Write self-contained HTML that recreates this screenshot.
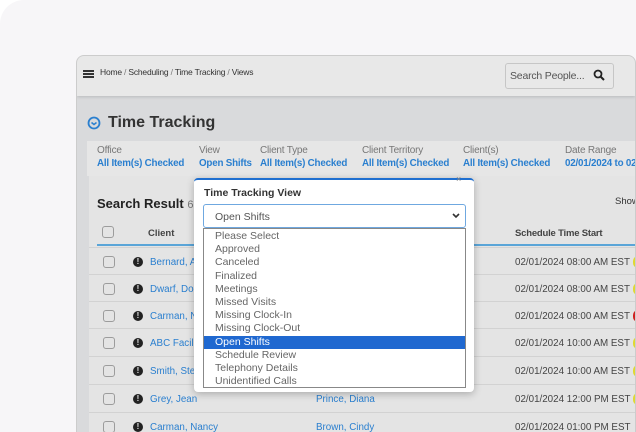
<!DOCTYPE html><html><head><style>
*{margin:0;padding:0;box-sizing:border-box}
html,body{width:636px;height:432px;overflow:hidden}
body{background:#f7f6f8;font-family:"Liberation Sans",sans-serif;position:relative}
.a{position:absolute}
.frame{left:76px;top:55px;width:560px;height:377px;background:#d9dadc;border-radius:8px 8px 0 0;overflow:hidden;border:1px solid #ccc;border-bottom:none}
.hdr{left:0;top:0;width:100%;height:40px;background:#e8e8e8;box-shadow:0 1px 3px rgba(0,0,0,.15)}
.lnk{color:#2a7fcf;font-weight:bold}
.f{font-size:10px;color:#777;line-height:13px;white-space:nowrap;letter-spacing:-0.2px}
.f .lnk{font-size:9.8px}
.row{position:absolute;left:0;width:560px;height:27px;border-top:1px solid #d2d2d2;font-size:9.8px}
.cb{position:absolute;width:12px;height:12px;border:1px solid #9c9c9c;border-radius:3px;background:#e4e4e4}
.ex{position:absolute;width:10px;height:10px;border-radius:50%;background:#222;color:#e4e4e4;font-size:8px;font-weight:bold;text-align:center;line-height:10px}
.opt{height:13.2px;line-height:13.2px;padding-left:11px;font-size:10.5px;color:#666}
.t{color:#444}
</style></head><body>
<div class="a" style="left:0;top:0;width:40px;height:40px;background:#fff"></div>
<div class="a" style="left:0;top:0;width:40px;height:40px;background:#f7f6f8;border-top-left-radius:24px"></div>
<div class="a frame">
 <div class="a hdr">
  <div class="a" style="left:6px;top:14px;width:11px;height:2px;background:#333;box-shadow:0 3px 0 #333,0 6px 0 #333"></div>
  <div class="a" style="left:23px;top:11px;font-size:8.5px;color:#333;letter-spacing:-0.2px">Home <span style="color:#777">/</span> Scheduling <span style="color:#777">/</span> Time Tracking <span style="color:#777">/</span> Views</div>
  <div class="a" style="left:428px;top:7px;width:109px;height:26px;border:1px solid #c6c6c6;border-radius:3px;font-size:10.5px;color:#555;padding:6px 0 0 4px;letter-spacing:-0.2px">Search People...</div>
  <svg class="a" style="left:516px;top:13px" width="12" height="12" viewBox="0 0 12 12"><circle cx="5" cy="5" r="3.5" fill="none" stroke="#222" stroke-width="1.8"/><path d="M7.5 7.5L11 11" stroke="#222" stroke-width="2"/></svg>
 </div>
 <svg class="a" style="left:10px;top:60px" width="14" height="14" viewBox="0 0 14 14"><circle cx="7" cy="7" r="5.5" fill="none" stroke="#2a7fcf" stroke-width="1.8"/><path d="M4.5 6.5L7 8.5 9.5 6.5" fill="none" stroke="#2a7fcf" stroke-width="1.5"/></svg>
 <div class="a" style="left:31px;top:58px;font-size:16px;font-weight:bold;color:#333">Time Tracking</div>
 <div class="a" style="left:10px;top:85px;width:550px;height:35px;background:#e6e6e6"></div>
 <div class="a f" style="left:20px;top:88px">Office<br><span class="lnk">All Item(s) Checked</span></div>
 <div class="a f" style="left:122px;top:88px">View<br><span class="lnk">Open Shifts</span></div>
 <div class="a f" style="left:183px;top:88px">Client Type<br><span class="lnk">All Item(s) Checked</span></div>
 <div class="a f" style="left:285px;top:88px">Client Territory<br><span class="lnk">All Item(s) Checked</span></div>
 <div class="a f" style="left:386px;top:88px">Client(s)<br><span class="lnk">All Item(s) Checked</span></div>
 <div class="a f" style="left:488px;top:88px">Date Range<br><span class="lnk">02/01/2024 to 02</span></div>
 <div class="a" style="left:12px;top:120px;width:560px;height:257px;background:#e4e4e4;overflow:hidden">
  <div class="a" style="left:8px;top:20px;font-size:13px;font-weight:bold;color:#222">Search Result <span style="font-weight:normal;color:#777;font-size:11px">61</span></div>
  <div class="a" style="left:526px;top:20px;font-size:9.5px;color:#333">Show</div>
  <div class="cb" style="left:13px;top:50px"></div>
  <div class="a" style="left:59px;top:52px;font-size:9.5px;font-weight:bold;color:#444">Client</div>
  <div class="a" style="left:426px;top:52px;font-size:9.5px;font-weight:bold;color:#444;letter-spacing:-0.2px">Schedule Time Start</div>
  <div class="a" style="left:8px;top:68px;width:552px;height:2px;background:#5aa5d8"></div>
  <div class="row" style="top:71px"><div class="cb" style="left:14px;top:8px"></div><div class="ex" style="left:44px;top:9px">!</div><div class="a lnk" style="left:61px;top:9px;font-weight:normal">Bernard, A</div><div class="a t" style="left:426px;top:9px">02/01/2024 08:00 AM EST</div><div class="a" style="left:544px;top:8px;width:10px;height:12px;border-radius:5px;background:#e0d830"></div></div>
  <div class="row" style="top:98px"><div class="cb" style="left:14px;top:8px"></div><div class="ex" style="left:44px;top:9px">!</div><div class="a lnk" style="left:61px;top:9px;font-weight:normal">Dwarf, Doc</div><div class="a t" style="left:426px;top:9px">02/01/2024 08:00 AM EST</div><div class="a" style="left:544px;top:8px;width:10px;height:12px;border-radius:5px;background:#e0d830"></div></div>
  <div class="row" style="top:125px"><div class="cb" style="left:14px;top:8px"></div><div class="ex" style="left:44px;top:9px">!</div><div class="a lnk" style="left:61px;top:9px;font-weight:normal">Carman, N</div><div class="a t" style="left:426px;top:9px">02/01/2024 08:00 AM EST</div><div class="a" style="left:544px;top:8px;width:10px;height:12px;border-radius:5px;background:#d02020"></div></div>
  <div class="row" style="top:152px"><div class="cb" style="left:14px;top:8px"></div><div class="ex" style="left:44px;top:9px">!</div><div class="a lnk" style="left:61px;top:9px;font-weight:normal">ABC Facili</div><div class="a t" style="left:426px;top:9px">02/01/2024 10:00 AM EST</div><div class="a" style="left:544px;top:8px;width:10px;height:12px;border-radius:5px;background:#e0d830"></div></div>
  <div class="row" style="top:180px"><div class="cb" style="left:14px;top:8px"></div><div class="ex" style="left:44px;top:9px">!</div><div class="a lnk" style="left:61px;top:9px;font-weight:normal">Smith, Ste</div><div class="a t" style="left:426px;top:9px">02/01/2024 10:00 AM EST</div><div class="a" style="left:544px;top:8px;width:10px;height:12px;border-radius:5px;background:#e0d830"></div></div>
  <div class="row" style="top:208px"><div class="cb" style="left:14px;top:8px"></div><div class="ex" style="left:44px;top:9px">!</div><div class="a lnk" style="left:61px;top:9px;font-weight:normal">Grey, Jean</div><div class="a lnk" style="left:227px;top:9px;font-weight:normal">Prince, Diana</div><div class="a t" style="left:426px;top:9px">02/01/2024 12:00 PM EST</div><div class="a" style="left:544px;top:8px;width:10px;height:12px;border-radius:5px;background:#e0d830"></div></div>
  <div class="row" style="top:236px"><div class="cb" style="left:14px;top:8px"></div><div class="ex" style="left:44px;top:9px">!</div><div class="a lnk" style="left:61px;top:9px;font-weight:normal">Carman, Nancy</div><div class="a lnk" style="left:227px;top:9px;font-weight:normal">Brown, Cindy</div><div class="a t" style="left:426px;top:9px">02/01/2024 01:00 PM EST</div></div>
 </div>
</div>
<div class="a" style="left:194px;top:178px;width:280px;height:214px;background:#fff;border-radius:4px;box-shadow:0 2px 8px rgba(0,0,0,.25);border-top:2px solid #1f6fd0">
 <div class="a" style="left:262px;top:-6px;font-size:9px;color:#888">×</div>
 <div class="a" style="left:10px;top:7px;font-size:10.5px;font-weight:bold;color:#333">Time Tracking View</div>
 <div class="a" style="left:9px;top:24px;width:263px;height:24px;border:1px solid #6fa8e0;border-radius:3px;font-size:10.5px;color:#555;padding:6px 0 0 11px">Open Shifts</div>
 <svg class="a" style="left:258px;top:33px" width="8" height="6" viewBox="0 0 8 6"><path d="M1 1L4 4 7 1" fill="none" stroke="#333" stroke-width="1.6"/></svg>
 <div class="a" style="left:9px;top:48px;width:263px;height:160px;border:1px solid #888;background:#fff;padding-top:1px">
  <div class="opt">Please Select</div><div class="opt">Approved</div><div class="opt">Canceled</div><div class="opt">Finalized</div><div class="opt">Meetings</div><div class="opt">Missed Visits</div><div class="opt">Missing Clock-In</div><div class="opt">Missing Clock-Out</div><div class="opt" style="background:#1f68d0;color:#fff">Open Shifts</div><div class="opt">Schedule Review</div><div class="opt">Telephony Details</div><div class="opt">Unidentified Calls</div>
 </div>
</div>
</body></html>
